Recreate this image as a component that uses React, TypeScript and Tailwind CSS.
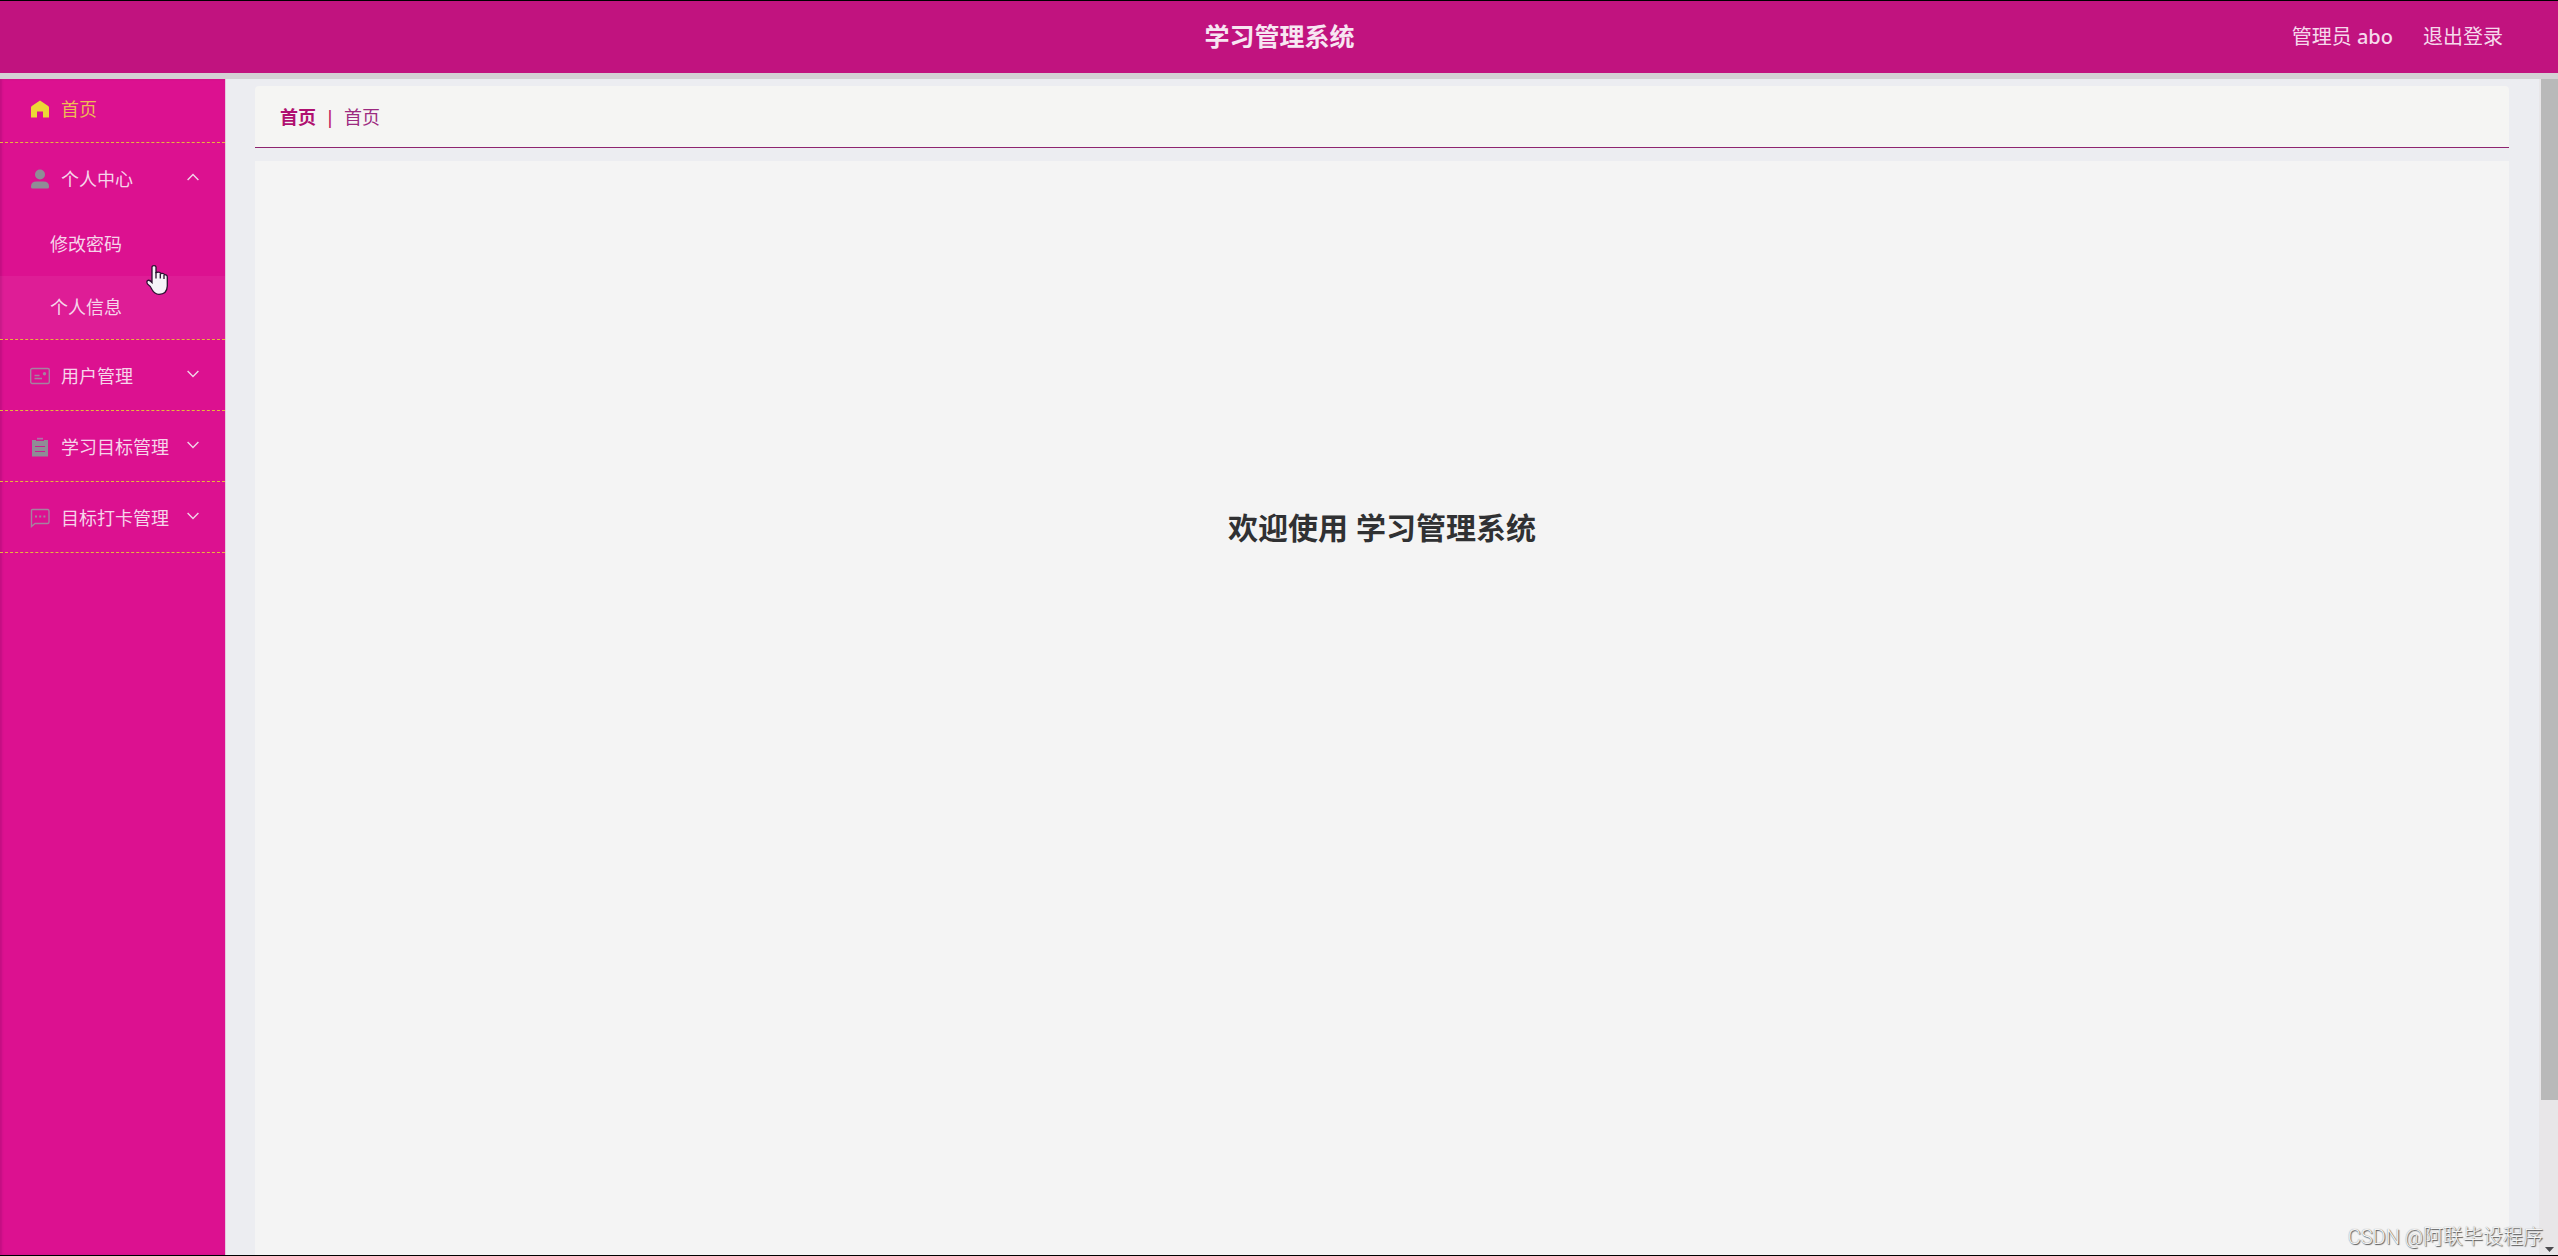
import React, { useState } from "react";
import clsx from "clsx";

interface MenuGroup {
  title: string;
  icon: React.ReactNode;
  children: string[];
}

const HomeIcon = () => (
  <svg viewBox="0 0 18 18" className="h-[18px] w-[18px] shrink-0" fill="#ecd836">
    <path d="M9 .5 L17.2 6 Q18 6.600 18 7.500 V17.500 H12 V11.500 H6 V17.500 H0 V7.500 Q0 6.600 .8 6 Z" />
  </svg>
);

const UserIcon = () => (
  <svg viewBox="0 0 18 20" className="h-5 w-[18px] shrink-0" fill="#8f8d96">
    <circle cx="9" cy="5.500" r="5" />
    <path d="M5.500 12.500 H12.500 Q18 12.500 18 17.500 V18 Q18 19.500 16.500 19.500 H1.500 Q0 19.500 0 18 V17.500 Q0 12.500 5.500 12.500 Z" />
  </svg>
);

const PostcardIcon = () => (
  <svg viewBox="0 0 20 18" className="-mx-px h-[18px] w-5 shrink-0" fill="none" stroke="#a5829f" strokeWidth="1.4">
    <rect x=".7" y="1.500" width="18.600" height="15" rx="1.500" />
    <path d="M4.500 8.500 H9.500 M4.500 11.500 H12" />
    <circle cx="14.500" cy="6.800" r="1.700" fill="#a5829f" stroke="none" />
  </svg>
);

const OrderIcon = () => (
  <svg viewBox="0 0 18 20" className="h-5 w-[18px] shrink-0">
    <path d="M1 3 H17 V19.500 H1 Z" fill="#8f8d96" />
    <path d="M6 2.500 V.8 H12 V2.500 Z" fill="#b070a8" />
    <path d="M5 3.500 H13 M4 9.500 H14 M4 14.500 H14" stroke="#c8208f" strokeWidth="1" />
  </svg>
);

const ChatIcon = () => (
  <svg viewBox="0 0 20 20" className="-mx-px h-5 w-5 shrink-0" fill="none" stroke="#a5829f" strokeWidth="1.4">
    <path d="M2.500 1.500 H17.500 Q19 1.500 19 3 V14 Q19 15.500 17.500 15.500 H5 L1.500 18.500 V2.500 Q1.500 1.500 2.500 1.500 Z" />
    <path d="M5 8.500 H7 M9.200 8.500 H11.200 M13.400 8.500 H15.400" strokeWidth="2" />
  </svg>
);

const Arrow = ({ open }: { open: boolean }) => (
  <svg
    viewBox="0 0 12 8"
    className={clsx("ml-auto h-2 w-3", open && "rotate-180")}
    fill="none"
    stroke="#f0d5e8"
    strokeWidth="1.4"
  >
    <path d="M.6 1 L6 6.500 L11.400 1" />
  </svg>
);

const PointerHand = () => (
  <svg viewBox="0 0 22 30" className="absolute left-[146px] top-[265px] h-[30px] w-[22px]">
    <path
      d="M6 2 Q6 .7 8 .7 Q10 .7 10 2 V7.500 Q14 6.500 15 8.500 Q18 8 18.500 9.700 Q21.300 9.500 21.300 12 V21 Q21 29.300 13 29.300 Q8.500 29.300 6 24.500 Q4.500 21 1.500 19 Q.3 17 1.500 15.500 Q3.500 14.500 6 17.500 Z"
      fill="#f6f5f8"
      stroke="#2b1030"
      strokeWidth="1.3"
    />
    <path d="M10 7 V13.500 M14.300 8.500 V13.500 M18 10 V14" stroke="#2b1030" strokeWidth="1.3" fill="none" />
  </svg>
);

const groups: MenuGroup[] = [
  { title: "个人中心", icon: <UserIcon />, children: ["修改密码", "个人信息"] },
  { title: "用户管理", icon: <PostcardIcon />, children: ["用户"] },
  { title: "学习目标管理", icon: <OrderIcon />, children: ["学习目标"] },
  { title: "目标打卡管理", icon: <ChatIcon />, children: ["目标打卡"] },
];

function Header() {
  return (
    <header className="grid h-[79px] grid-cols-3 items-center border-b-6 border-t border-b-[#d4d1d4] border-t-black bg-[#c1137f] pr-[55px] text-[#f6d9ec]">
      <span />
      <h1 className="pb-0.5 pl-14 text-center text-[25px] font-bold leading-9 text-[#f7e6f2]">学习管理系统</h1>
      <div className="flex items-center justify-end gap-[30px] text-xl">
        <span>
          管理员 <span className="font-medium">abo</span>
        </span>
        <button className="cursor-pointer">退出登录</button>
      </div>
    </header>
  );
}

function Sidebar() {
  const [opened, setOpened] = useState("个人中心");

  return (
    <nav className="w-[226px] shrink-0 border-r border-[#e6c6de] bg-[#dc1190] text-lg text-[#f6d5ea] shadow-[inset_2px_0_2px_rgba(60,0,60,0.15)]">
      <a
        href="#home"
        className="flex h-16 items-center gap-3 border-b border-dashed border-[#e9b53c] pb-1 pl-[31px] text-[#eebb55]"
      >
        <HomeIcon />
        首页
      </a>
      {groups.map((group) => {
        const open = opened === group.title;
        return (
          <div key={group.title} className="border-b border-dashed border-[#e9b53c]">
            <button
              onClick={() => setOpened(open ? "" : group.title)}
              className="flex h-[70px] w-full cursor-pointer items-center pb-0.5 pl-[31px] pr-[26px]"
            >
              <span className="flex items-center gap-3 pt-1">
                {group.icon}
                {group.title}
              </span>
              <Arrow open={open} />
            </button>
            {open &&
              group.children.map((name) => (
                <a
                  key={name}
                  href={`#${name}`}
                  className="flex h-[63px] items-center pb-0.5 pl-[50px] last:bg-white/5"
                >
                  {name}
                </a>
              ))}
          </div>
        );
      })}
    </nav>
  );
}

function Breadcrumb() {
  return (
    <div className="flex h-[62px] items-center gap-3 rounded-t border-b border-[#8e246f] bg-[#f5f5f3] pl-[25px] text-lg text-[#9c2a80]">
      <b className="text-[#b01070]">首页</b>
      <span className="flex w-1 justify-center font-medium text-[#c02060]">|</span>
      <span>首页</span>
    </div>
  );
}

export default function App() {
  return (
    <div className="relative flex min-h-screen flex-col border-b border-black bg-[#ecedf1] font-['Noto_Sans','Noto_Sans_CJK_SC',sans-serif]">
      <Header />
      <div className="flex flex-1">
        <Sidebar />
        <main className="flex flex-1 flex-col gap-[13px] pl-[29px] pr-[30px] pt-[7px]">
          <Breadcrumb />
          <section className="flex-1 bg-[#f4f4f4] pt-[347px] text-center">
            <h2 className="text-3xl font-bold leading-10 text-[#303133]">欢迎使用 学习管理系统</h2>
          </section>
        </main>
        {/* Scrollbar */}
        <div className="flex w-[19px] shrink-0 flex-col items-end justify-between bg-[#e8e6e8]">
          <div className="h-[1021px] w-[17px] bg-[#b9b9b9]" />
          <svg viewBox="0 0 17 10" className="h-[10px] w-[17px]" fill="#4b4b4f">
            <path d="M4 2 H13 L8.500 7 Z" />
          </svg>
        </div>
      </div>
      <PointerHand />
      {/* Watermark */}
      <p className="absolute bottom-1 right-[15px] font-[Roboto,'Noto_Sans_CJK_SC',sans-serif] text-xl font-light leading-7 text-[#f4f4f4] [text-shadow:1px_1px_1px_#555,0_0_1px_#888]">
        CSDN @阿联毕设程序
      </p>
    </div>
  );
}
